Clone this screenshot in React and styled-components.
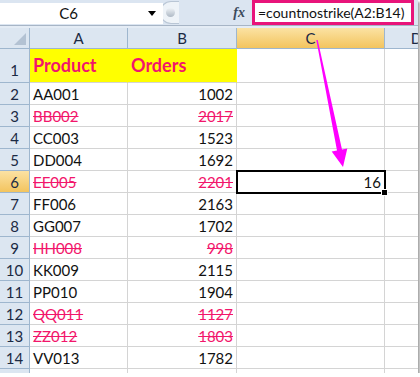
import React from "react";
import styled, { createGlobalStyle } from "styled-components";

const Global = createGlobalStyle`
  body {
    margin: 0;
    background: #ffffff;
    font-family: "Lato", "Liberation Sans", sans-serif;
  }
`;

const COLS = "30px 98px 109px 148px 64px";
const PINK = "#f2166b";

const Frame = styled.div`
  position: relative;
  width: 418px;
  height: 373px;
  overflow: hidden;
  background: #ffffff;
  box-shadow: 2px 2px 2px rgba(0, 0, 0, 0.35);
`;

const FormulaBar = styled.div`
  display: flex;
  align-items: center;
  height: 25px;
  background: #dbe5f1;
  border-bottom: 1px solid #a7b5c6;
`;

const NameBox = styled.div`
  position: relative;
  display: flex;
  align-items: center;
  justify-content: center;
  width: 163px;
  height: 21px;
  margin-top: 1px;
  background: #ffffff;
  font-size: 15px;
  color: #111;
`;

const NameText = styled.span`
  margin-right: 26px;
`;

const Caret = styled.span`
  position: absolute;
  right: 7px;
  top: 8px;
  width: 0;
  height: 0;
  border-left: 4px solid transparent;
  border-right: 4px solid transparent;
  border-top: 5px solid #000;
`;

const Knob = styled.div`
  width: 18px;
  height: 21px;
  margin-left: -3px;
  border-radius: 11px 0 0 11px;
  background: #eef3f8;
  border: 1px solid #b9c6d5;
  border-right: none;
  display: flex;
  align-items: center;
  justify-content: center;
`;

const KnobDot = styled.div`
  width: 9px;
  height: 9px;
  border-radius: 50%;
  background: linear-gradient(#eef2f6, #aeb9c5);
`;

const Fx = styled.div`
  width: 66px;
  text-align: right;
  padding-right: 7px;
  font-family: "Liberation Serif", serif;
  font-style: italic;
  font-weight: bold;
  font-size: 14px;
  color: #3a4a5c;
`;

const FormulaInput = styled.div`
  box-sizing: border-box;
  width: 162px;
  height: 25px;
  padding-left: 3px;
  display: flex;
  align-items: center;
  white-space: nowrap;
  overflow: hidden;
  background: #ffffff;
  border: 3px solid #e8147a;
  font-size: 14px;
  color: #111;
`;

const Gap = styled.div`
  height: 2px;
  background: #e4ecf5;
`;

const Row = styled.div`
  display: grid;
  grid-template-columns: ${COLS};
  height: ${(p) => p.$h || 22}px;
`;

const Head = styled.div`
  box-sizing: border-box;
  display: flex;
  align-items: ${(p) => (p.$bottom ? "flex-end" : "center")};
  justify-content: center;
  padding-bottom: ${(p) => (p.$bottom ? "3px" : "0")};
  font-size: 15px;
  color: #1b2a44;
  background: ${(p) =>
    p.$active ? "linear-gradient(#fbe2a3, #f3c45e)" : "#dce6f1"};
  border-right: 1px solid #9eb6ce;
  border-bottom: 1px solid #9eb6ce;
`;

const Corner = styled(Head)`
  position: relative;
  &::after {
    content: "";
    position: absolute;
    right: 3px;
    bottom: 3px;
    border-left: 12px solid transparent;
    border-bottom: 12px solid #b3c2d3;
  }
`;

const Cell = styled.div`
  position: relative;
  box-sizing: border-box;
  display: flex;
  align-items: ${(p) => (p.$bottom ? "flex-end" : "center")};
  justify-content: ${(p) => (p.$num ? "flex-end" : "flex-start")};
  padding: ${(p) => (p.$bottom ? "0 3px 6px" : "0 3px")};
  font-size: ${(p) => (p.$title ? "18px" : "15px")};
  font-weight: ${(p) => (p.$title ? "bold" : "normal")};
  color: ${(p) => (p.$pink ? PINK : "#111")};
  text-decoration: ${(p) => (p.$strike ? "line-through" : "none")};
  background: ${(p) => (p.$yellow ? "#ffff00" : "#ffffff")};
  border-right: 1px solid ${(p) => (p.$yellow ? "#ffff00" : "#d4d4d4")};
  border-bottom: 1px solid #d4d4d4;
  ${(p) =>
    p.$selected &&
    `
    outline: 2px solid #000;
    outline-offset: -1px;
    z-index: 1;
    &::after {
      content: "";
      position: absolute;
      right: -4px;
      bottom: -4px;
      width: 5px;
      height: 5px;
      background: #000;
      border: 1px solid #fff;
    }
  `}
`;

const Overlay = styled.svg`
  position: absolute;
  left: 0;
  top: 0;
  pointer-events: none;
  z-index: 2;
`;

const data = [
  ["AA001", "1002", false],
  ["BB002", "2017", true],
  ["CC003", "1523", false],
  ["DD004", "1692", false],
  ["EE005", "2201", true],
  ["FF006", "2163", false],
  ["GG007", "1702", false],
  ["HH008", "998", true],
  ["KK009", "2115", false],
  ["PP010", "1904", false],
  ["QQ011", "1127", true],
  ["ZZ012", "1803", true],
  ["VV013", "1782", false],
];

export default function App() {
  return (
    <>
      <Global />
      <Frame>
        <FormulaBar>
          <NameBox>
            <NameText>C6</NameText>
            <Caret />
          </NameBox>
          <Knob>
            <KnobDot />
          </Knob>
          <Fx>fx</Fx>
          <FormulaInput>=countnostrike(A2:B14)</FormulaInput>
        </FormulaBar>
        <Gap />
        <Row $h={21}>
          <Corner />
          <Head>A</Head>
          <Head>B</Head>
          <Head $active>C</Head>
          <Head>D</Head>
        </Row>
        <Row $h={34}>
          <Head $bottom>1</Head>
          <Cell $yellow $title $pink $bottom>
            Product
          </Cell>
          <Cell $yellow $title $pink $bottom>
            Orders
          </Cell>
          <Cell />
          <Cell />
        </Row>
        {data.map(([name, orders, struck], i) => (
          <Row key={name}>
            <Head $active={i === 4}>{i + 2}</Head>
            <Cell $pink={struck} $strike={struck}>
              {name}
            </Cell>
            <Cell $num $pink={struck} $strike={struck}>
              {orders}
            </Cell>
            {i === 4 ? (
              <Cell $num $selected>
                16
              </Cell>
            ) : (
              <Cell />
            )}
            <Cell />
          </Row>
        ))}
        <Row>
          <Head />
          <Cell />
          <Cell />
          <Cell />
          <Cell />
        </Row>
        <Overlay width="420" height="377" viewBox="0 0 420 377">
          <polygon
            fill="#ff00ff"
            points="316.3,40.1 317.7,39.9 342,149.5 347.3,148.4 343,167 331.7,151.6 337,150.5"
          />
        </Overlay>
      </Frame>
    </>
  );
}
